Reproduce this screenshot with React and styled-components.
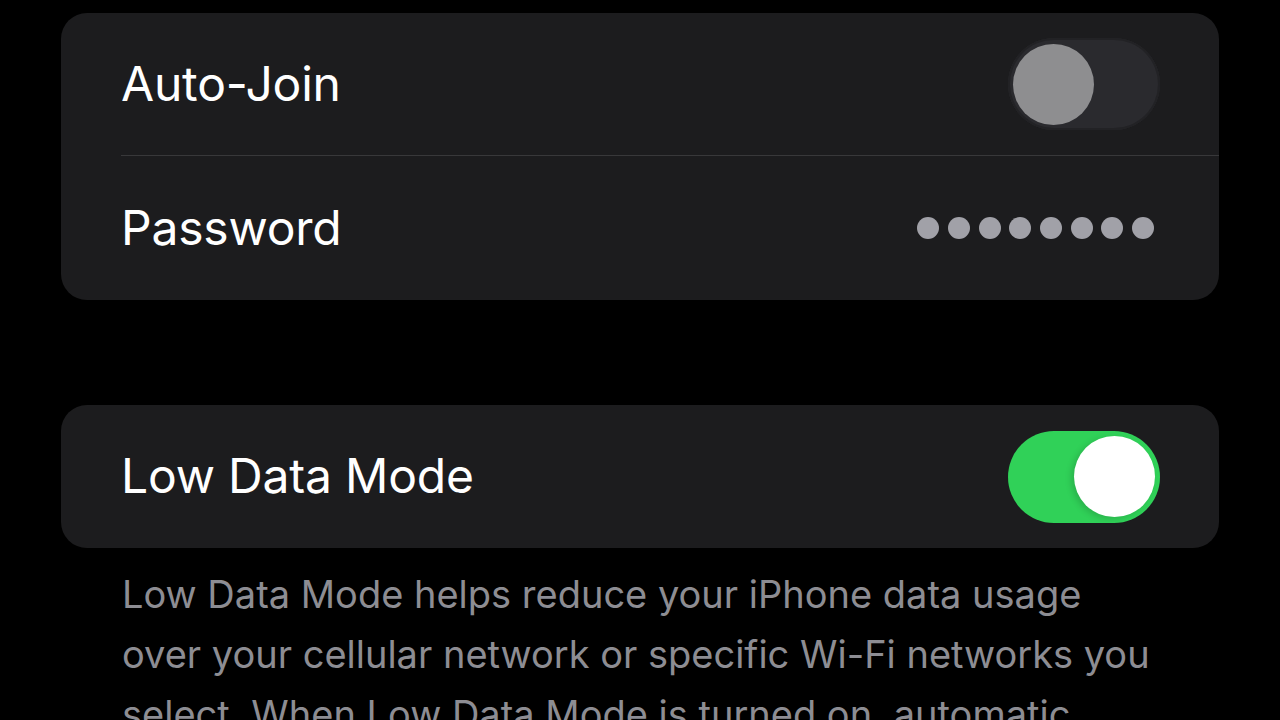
import React from "react";
import styled, { createGlobalStyle } from "styled-components";

const Global = createGlobalStyle`
  html, body { margin: 0; padding: 0; background: #000; }
  body { font-family: Inter, "Noto Sans", sans-serif; -webkit-font-smoothing: antialiased; }
`;

const Page = styled.div`
  width: 1280px;
  height: 720px;
  overflow: hidden;
  background: #000;
  padding: 13px 61px 0 61px;
  box-sizing: border-box;
  display: flex;
  flex-direction: column;
`;

const Card = styled.div`
  background: #1c1c1e;
  border-radius: 26px;
  padding-left: 60px;
  margin-top: ${(p) => p.$top || 0}px;
  display: flex;
  flex-direction: column;
`;

const Row = styled.div`
  height: ${(p) => p.$h}px;
  display: flex;
  align-items: center;
  justify-content: space-between;
  padding-right: 59px;
  border-bottom: ${(p) => (p.$divider ? "1px solid #38383a" : "none")};
`;

const Label = styled.span`
  color: #fff;
  font-size: 48px;
  font-weight: 400;
  letter-spacing: -0.2px;
  margin-top: -2px;
`;

const Track = styled.div`
  width: 152px;
  height: 92px;
  border-radius: 46px;
  background: ${(p) => (p.$on ? "#30d158" : "#2a2a2e")};
  box-shadow: ${(p) => (p.$on ? "none" : "inset 0 0 0 2px #222225")};
  display: flex;
  align-items: center;
  justify-content: ${(p) => (p.$on ? "flex-end" : "flex-start")};
  padding: 0 5px;
  box-sizing: border-box;
`;

const Knob = styled.div`
  width: 81px;
  height: 81px;
  border-radius: 50%;
  background: ${(p) => (p.$on ? "#fff" : "#8e8e90")};
  box-shadow: ${(p) => (p.$on ? "-3px 2px 6px rgba(0,0,0,0.15)" : "none")};
`;

const Dots = styled.div`
  display: flex;
  gap: 8.7px;
  margin-right: 6px;
`;

const Dot = styled.span`
  width: 22px;
  height: 22px;
  border-radius: 50%;
  background: #a1a1a8;
`;

const Footer = styled.p`
  margin: 16px 0 0 0;
  padding: 0 58px 0 61px;
  color: #8d8d93;
  font-size: 38px;
  line-height: 60px;
  letter-spacing: 0;
`;

const Toggle = ({ on }) => (
  <Track $on={on}>
    <Knob $on={on} />
  </Track>
);

export default function App() {
  return (
    <>
      <Global />
      <Page>
        <Card>
          <Row $h={142} $divider>
            <Label>Auto-Join</Label>
            <Toggle on={false} />
          </Row>
          <Row $h={144}>
            <Label>Password</Label>
            <Dots>
              {Array.from({ length: 8 }).map((_, i) => (
                <Dot key={i} />
              ))}
            </Dots>
          </Row>
        </Card>
        <Card $top={105}>
          <Row $h={143}>
            <Label>Low Data Mode</Label>
            <Toggle on />
          </Row>
        </Card>
        <Footer>
          Low Data Mode helps reduce your iPhone data usage over your cellular
          network or specific Wi-Fi networks you select. When Low Data Mode is
          turned on, automatic updates and background tasks, such as Photos
          syncing, are paused.
        </Footer>
      </Page>
    </>
  );
}
